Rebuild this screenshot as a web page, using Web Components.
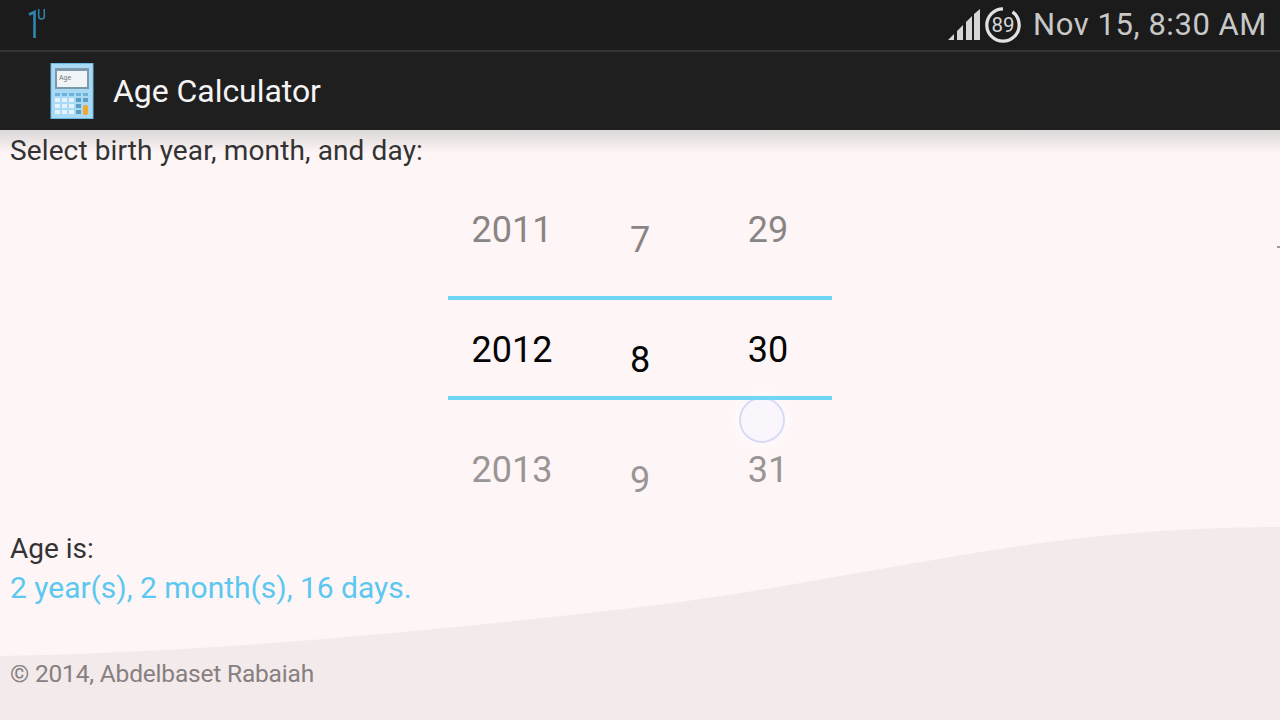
<!DOCTYPE html>
<html>
<head>
<meta charset="utf-8">
<style>
html, body { margin: 0; height: 100%; }
body { width: 1280px; height: 720px; overflow: hidden; font-family: Roboto, sans-serif; background: #fef5f6; }
app-screen { width: 1280px; height: 720px; }
p-text.select { margin-top: 1px; letter-spacing: 0.12px; }
date-picker { margin-top: -1px; margin-bottom: -1px; }
p-text.result { margin-top: -1px; letter-spacing: -0.02px; }
p-text.copy { margin-top: 46px; letter-spacing: -0.19px; }
</style>
</head>
<body>

<app-screen>
   <status-bar slot="top" time="Nov 15, 8:30 AM" level="89"></status-bar>
   <action-bar slot="top" title="Age Calculator"></action-bar>

   <p-text size="28" color="#333" class="select">Select birth year, month, and day:</p-text>

   <date-picker></date-picker>

   <p-text size="28" color="#333" class="age">Age is:</p-text>
   <p-text size="30" color="#5cc8f0" class="result">2 year(s), 2 month(s), 16 days.</p-text>
   <p-text size="24.5" color="#87807f" class="copy">© 2014, Abdelbaset Rabaiah</p-text>
</app-screen>

<script>
// status bar, notification glyph on the left and clock on the right
class StatusBar extends HTMLElement {
   constructor() {
      super();
      this.attachShadow({ mode: 'open' })
      this.shadowRoot.innerHTML = `
      <style>
      :host { display: flex; align-items: center; height: 50px; background: #1b1b1b; border-bottom: 2px solid #343434; color: #c8c8c8; padding: 0 13px 0 28px; }
      .note { display: flex; align-items: flex-start; flex: 1; height: 50px; }
      .note svg { display: block; margin-top: 8px; }
      .right { display: flex; align-items: center; }
      .signal { display: block; margin-right: 5px; }
      .batt { display: block; margin-right: 12px; }
      .time { font-size: 31px; letter-spacing: 0.55px; white-space: nowrap; font-weight: 400; line-height: 50px; }
      text { font-family: Roboto, sans-serif; }
      </style>
      <div class="note">
         <svg width="20" height="34" viewBox="0 0 20 34">
            <path d="M1 6.5 L6.5 4 V30" fill="none" stroke="#2f86ad" stroke-width="2.6"/>
            <path d="M10.7 1 V8 Q10.7 11 13.5 11 Q16.3 11 16.3 8 V1" fill="none" stroke="#2f86ad" stroke-width="1.5"/>
         </svg>
      </div>
      <div class="right">
         <svg class="signal" width="32" height="34" viewBox="0 0 32 34">
            <path d="M0 32 L6 26 V32 Z M9 32 V23 L15 17 V32 Z M18 32 V14 L24 8 V32 Z M26 32 V6 L32 1 V32 Z" fill="#d6d6d6"/>
         </svg>
         <svg class="batt" width="36" height="36" viewBox="0 0 36 36">
            <circle cx="18" cy="18" r="16.2" fill="none" stroke="#e2e2e2" stroke-width="3.2" stroke-dasharray="91 102" transform="rotate(-90 18 18) scale(1 -1) translate(0 -36)"/>
            <text x="18" y="25" font-size="20.5" text-anchor="middle" fill="#d8d8d8">${this.getAttribute('level')}</text>
         </svg>
         <span class="time">${this.getAttribute('time')}</span>
      </div>`
   }
}

// action bar with the app icon
class ActionBar extends HTMLElement {
   constructor() {
      super();
      this.attachShadow({ mode: 'open' })
      this.shadowRoot.innerHTML = `
      <style>
      :host { display: flex; align-items: center; height: 78px; background: #1f1f1f; padding-left: 50px; color: #f4f4f4; }
      svg { display: block; margin-right: 19px; margin-top: -1px; }
      h1 { margin: 0; font-size: 32px; font-weight: 400; line-height: 78px; white-space: nowrap; letter-spacing: -0.05px; }
      text { font-family: Roboto, sans-serif; }
      </style>
      <svg width="44" height="56" viewBox="0 0 44 56">
         <rect x="1" y="0.5" width="42" height="55" fill="#a8daf6"/>
         <rect x="1" y="0.5" width="42" height="55" fill="none" stroke="#6cb9e6"/>
         <rect x="5" y="5" width="34" height="21" fill="#7d98a8"/>
         <rect x="7" y="8" width="30" height="16" fill="#f0f4f6"/>
         <text x="9" y="17" font-size="7" fill="#777">Age</text>
         <g fill="#6fb3d8">
            <rect x="5" y="30" width="5" height="3"/><rect x="12" y="30" width="5" height="3"/><rect x="19" y="30" width="5" height="3"/><rect x="26" y="30" width="5" height="3"/><rect x="33" y="30" width="5" height="3"/>
         </g>
         <g fill="#e3f2fb">
            <rect x="5" y="35" width="5" height="4"/><rect x="12" y="35" width="5" height="4"/><rect x="19" y="35" width="5" height="4"/>
            <rect x="5" y="41" width="5" height="4"/><rect x="12" y="41" width="5" height="4"/><rect x="19" y="41" width="5" height="4"/>
            <rect x="5" y="47" width="5" height="4"/><rect x="12" y="47" width="5" height="4"/><rect x="19" y="47" width="5" height="4"/>
         </g>
         <g fill="#5d9fc4">
            <rect x="26" y="35" width="5" height="4"/><rect x="33" y="35" width="5" height="4"/>
            <rect x="26" y="41" width="5" height="4"/><rect x="26" y="47" width="5" height="4"/>
         </g>
         <rect x="33" y="42" width="5" height="10" rx="2" fill="#f0a830"/>
      </svg>
      <h1>${this.getAttribute('title')}</h1>`
   }
}

// a line of text
class PText extends HTMLElement {
   constructor() {
      super();
      this.attachShadow({ mode: 'open' })
      this.shadowRoot.innerHTML = `
      <style>
      :host { display: block; padding-left: 10px; white-space: nowrap; font-size: ${this.getAttribute('size')}px; color: ${this.getAttribute('color')}; line-height: 40px; }
      </style>
      <slot></slot>`
   }
}

// one wheel of the picker: previous, current and next value
class PickerColumn extends HTMLElement {
   constructor() {
      super();
      this.attachShadow({ mode: 'open' })
      const [a, b, c] = this.getAttribute('values').split(',')
      this.shadowRoot.innerHTML = `
      <style>
      :host { display: grid; grid-template-rows: repeat(3, 120px); width: 128px; justify-items: center; align-items: center; font-size: 36px; }
      :host([shift]) { padding-top: 10px; height: 350px; }
      .prev { color: #8a8585; }
      .cur { color: #050505; }
      .next { color: #9a9595; }
      </style>
      <span class="prev">${a}</span>
      <span class="cur">${b}</span>
      <span class="next">${c}</span>`
   }
}

class DatePicker extends HTMLElement {
   constructor() {
      super();
      this.attachShadow({ mode: 'open' })
      this.shadowRoot.innerHTML = `
      <style>
      :host { display: block; width: 384px; height: 360px; margin: 0 auto; position: relative; }
      .cols { display: flex; height: 360px; }
      .line { position: absolute; left: 0; right: 0; height: 4px; background: #6fd6f6; }
      .touch { position: absolute; left: 291px; top: 227px; width: 46px; height: 46px; border-radius: 50%; border: 2.5px solid #d8dbf6; background: #fbf6fb; box-sizing: border-box; box-shadow: 0 0 10px 5px #fffafc; }
      </style>
      <div class="cols">
         <picker-column values="2011,2012,2013"></picker-column>
         <picker-column values="7,8,9" shift></picker-column>
         <picker-column values="29,30,31"></picker-column>
      </div>
      <div class="touch"></div>
      <div class="line" style="top:126px"></div>
      <div class="line" style="top:226px"></div>`
   }
}

// page frame: the bars, then the content over the curved background
class AppScreen extends HTMLElement {
   constructor() {
      super();
      this.attachShadow({ mode: 'open' })
      this.shadowRoot.innerHTML = `
      <style>
      :host { display: flex; flex-direction: column; position: relative; overflow: hidden; background: #fef5f6; }
      .top { position: relative; z-index: 3; display: block; }
      .content { position: relative; flex: 1; display: block; }
      .curve { position: absolute; left: 0; top: 0; display: block; }
      .shade { position: absolute; left: 0; right: 0; top: 0; height: 24px; background: linear-gradient(#dcd8d8, #fef5f600); }
      .mark { position: absolute; right: 0; top: 116px; width: 3px; height: 2px; background: #999; }
      .body { position: relative; display: block; height: 590px; }
      </style>
      <div class="top"><slot name="top"></slot></div>
      <div class="content">
         <svg class="curve" width="1280" height="590" viewBox="0 0 1280 590">
            <path d="M0 526 C 200 522 400 505 640 477 C 800 458 960 420 1100 406 C 1160 400 1220 397 1280 397 V590 H0 Z" fill="#f3eaeb"/>
         </svg>
         <div class="shade"></div>
         <div class="mark"></div>
         <div class="body"><slot></slot></div>
      </div>`
   }
}

function register() {
   customElements.define('status-bar', StatusBar)
   customElements.define('action-bar', ActionBar)
   customElements.define('p-text', PText)
   customElements.define('picker-column', PickerColumn)
   customElements.define('date-picker', DatePicker)
   customElements.define('app-screen', AppScreen)
}

register()
</script>
</body>
</html>
